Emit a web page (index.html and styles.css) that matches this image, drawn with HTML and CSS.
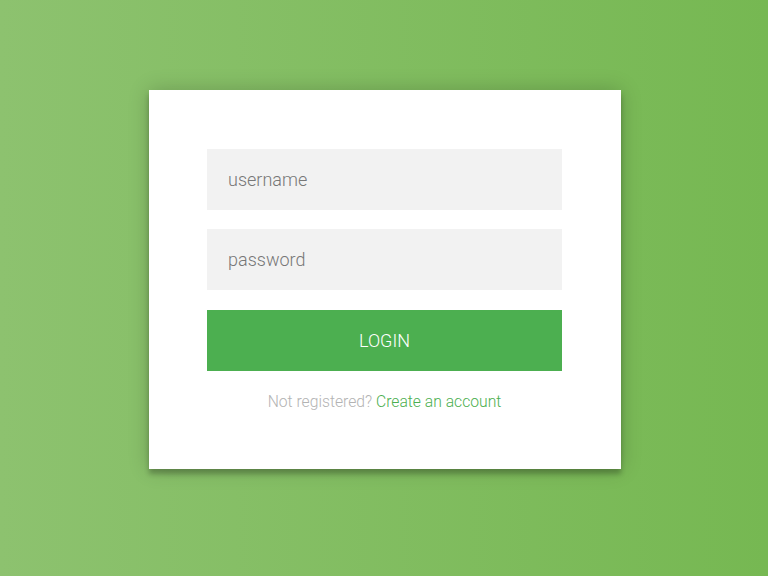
FILE: index.html
```html
<!DOCTYPE html>
<html lang="en">
<head>
<meta charset="utf-8">
<title>Login</title>
<link rel="stylesheet" href="styles.css">
</head>
<body>
  <main class="page">
    <form class="login-card">
      <input class="field" type="text" placeholder="username">
      <input class="field" type="password" placeholder="password">
      <button class="login-btn" type="button">LOGIN</button>
      <p class="message">Not registered? <a href="#">Create an account</a></p>
    </form>
  </main>
</body>
</html>
```

FILE: styles.css
```css
html, body {
  margin: 0;
  height: 100%;
}

body {
  background: linear-gradient(to left, #76b852, #8dc26f);
  font-family: Roboto, "Noto Sans", sans-serif;
}

.page {
  display: flex;
  justify-content: center;
  padding: 90px 0 0 2px;
}

.login-card {
  width: 472px;
  box-sizing: border-box;
  padding: 59px 59px 57px 58px;
  background: #fff;
  box-shadow: 0 0 20px rgba(0, 0, 0, 0.2), 0 5px 5px rgba(0, 0, 0, 0.24);
  display: flex;
  flex-direction: column;
}

.field {
  height: 61px;
  margin: 0 0 19px;
  border: 0;
  outline: 0;
  background: #f2f2f2;
  box-sizing: border-box;
  padding: 0 21px;
  font-family: inherit;
  font-size: 18px;
  font-weight: 300;
  color: #333;
}

.field::placeholder {
  color: #777;
}

.login-btn {
  height: 61px;
  margin-top: 1px;
  border: 0;
  background: #4caf50;
  color: #fff;
  font-family: inherit;
  font-size: 18px;
  font-weight: 300;
  cursor: pointer;
}

.message {
  margin: 21px 0 0;
  text-align: center;
  font-size: 15.7px;
  line-height: 20px;
  font-weight: 300;
  color: #b3b3b3;
}

.message a {
  color: #4caf50;
  text-decoration: none;
}
```
